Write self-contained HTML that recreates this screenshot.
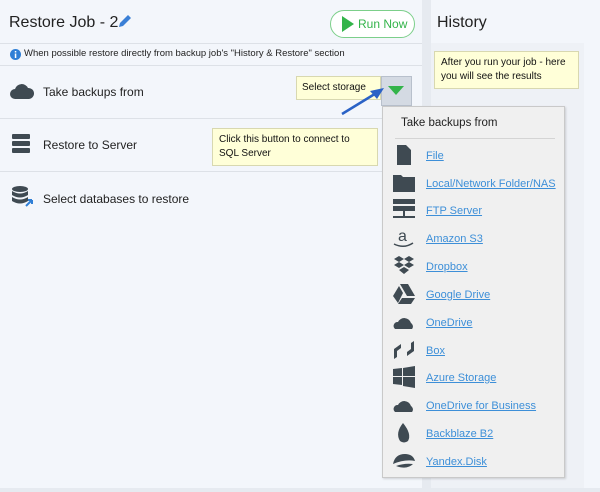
<!DOCTYPE html>
<html><head><style>
*{margin:0;padding:0;box-sizing:border-box}
body{width:600px;height:492px;background:#f3f6fb;font-family:"Liberation Sans",sans-serif;position:relative;overflow:hidden;color:#222}
.abs{position:absolute}
.sep{position:absolute;left:0;width:422px;height:1px;background:#dde1e7}
.ttl{font-size:16px;color:#222}
.row{position:absolute;left:43px;font-size:12px;color:#222}
.tip{position:absolute;background:#ffffd8;border:1px solid #d8d8b0;font-size:10px;color:#111;padding:5px}
.dd{position:absolute;left:382px;top:106px;width:183px;height:372px;background:#f0f0f0;border:1px solid #c9c9c9;box-shadow:1px 1px 2px rgba(0,0,0,.15)}
.it{position:absolute;left:43px;font-size:11px;color:#3d8fd8;text-decoration:underline}
.ic{position:absolute;left:10px;width:22px;height:22px}
</style></head><body>
<div class="abs" style="left:422px;top:0;width:9px;height:492px;background:#e6eaf0"></div>
<div class="abs" style="left:431px;top:43px;width:153px;height:449px;background:#eef1f6"></div>
<div class="abs" style="left:584px;top:43px;width:16px;height:449px;background:#f3f6fb"></div>
<div class="abs" style="left:0;top:488px;width:600px;height:4px;background:#e6eaf0"></div>
<div class="abs ttl" style="left:9px;top:14px">Restore Job - 2</div>
<svg class="abs" style="left:118px;top:14px" width="14" height="14" viewBox="0 0 14 14"><path d="M1 13l1-4 8-8 3 3-8 8z" fill="#3a7fd6"/></svg>
<div class="abs" style="left:330px;top:10px;width:85px;height:28px;border:1.5px solid #7ccf8a;border-radius:14px;background:#fff"></div>
<svg class="abs" style="left:342px;top:16px" width="12" height="16"><path d="M0 0L12 8L0 16z" fill="#33b44a"/></svg>
<div class="abs" style="left:358px;top:17px;font-size:12px;color:#33b44a">Run Now</div>
<div class="abs ttl" style="left:437px;top:14px">History</div>
<div class="sep" style="top:43px"></div>
<svg class="abs" style="left:10px;top:49px" width="11" height="11"><circle cx="5.5" cy="5.5" r="5.5" fill="#2f7fd6"/><rect x="4.8" y="4.5" width="1.5" height="4.5" fill="#fff"/><rect x="4.8" y="2" width="1.5" height="1.5" fill="#fff"/></svg>
<div class="abs" style="left:24px;top:48px;font-size:9.5px;color:#222">When possible restore directly from backup job's "History &amp; Restore" section</div>
<div class="sep" style="top:65px"></div>
<svg class="abs" style="left:10px;top:83px" width="24" height="16"><path d="M5 16a5 5 0 0 1 0-10a7 7 0 0 1 13-1a5.5 5.5 0 0 1 1 11z" fill="#3f4a52"/></svg>
<div class="row" style="top:85px">Take backups from</div>
<div class="sep" style="top:118px"></div>
<svg class="abs" style="left:12px;top:134px" width="18" height="20"><rect y="0" width="18" height="5" rx="1" fill="#3f4a52"/><rect y="7" width="18" height="5" rx="1" fill="#3f4a52"/><rect y="14" width="18" height="5" rx="1" fill="#3f4a52"/></svg>
<div class="row" style="top:138px">Restore to Server</div>
<div class="sep" style="top:171px"></div>
<svg class="abs" style="left:11px;top:185px" width="22" height="22"><ellipse cx="9" cy="4" rx="8" ry="3" fill="#3f4a52"/><path d="M1 6q8 5 16 0v4q-8 5-16 0zM1 12q8 5 16 0v4q-8 5-16 0z" fill="#3f4a52"/><path d="M15 21l6-6M21 15v4M21 15h-4" stroke="#2f7fd6" stroke-width="2" fill="none"/></svg>
<div class="row" style="top:192px">Select databases to restore</div>
<div class="tip" style="left:434px;top:51px;width:145px;height:38px;padding:4px 6px;line-height:14px">After you run your job - here you will see the results</div>
<div class="tip" style="left:296px;top:76px;width:85px;height:24px">Select storage</div>
<div class="abs" style="left:381px;top:76px;width:31px;height:30px;background:#d4dae3;border:1px solid #b8c0cc"></div>
<svg class="abs" style="left:388px;top:86px" width="16" height="9"><path d="M0 0h16L8 9z" fill="#33b44a"/></svg>
<svg class="abs" style="left:340px;top:86px" width="46" height="30"><path d="M2 28L38 6" stroke="#2a62c6" stroke-width="2.5"/><path d="M44 2L30 5L37 13z" fill="#2a62c6"/></svg>
<div class="tip" style="left:212px;top:128px;width:166px;height:38px;padding:4px 6px;line-height:14px">Click this button to connect to SQL Server</div>
<div class="dd">
<div class="abs" style="left:18px;top:10px;font-size:11.5px;color:#222">Take backups from</div>
<div class="abs" style="left:12px;top:31px;width:160px;height:1px;background:#d4d4d4"></div>
<svg class="ic" style="top:37px" viewBox="0 0 22 22"><path d="M4 1h9l5 5v15H4z" fill="#3f4a52"/></svg><div class="it" style="top:43px">File</div>
<svg class="ic" style="top:65px" viewBox="0 0 22 22"><path d="M0 3h8l2 2h12v15H0z" fill="#3f4a52"/></svg><div class="it" style="top:71px">Local/Network Folder/NAS</div>
<svg class="ic" style="top:92px" viewBox="0 0 22 22"><rect x="0" y="0" width="22" height="5" fill="#3f4a52"/><rect x="0" y="7" width="22" height="5" fill="#3f4a52"/><path d="M11 12v5M0 18h22" stroke="#3f4a52" stroke-width="2"/></svg><div class="it" style="top:98px">FTP Server</div>
<svg class="ic" style="top:120px" viewBox="0 0 22 22"><text x="5" y="14" font-size="16" font-family="Liberation Sans" fill="#3f4a52">a</text><path d="M1 17q10 5 19-1" stroke="#3f4a52" stroke-width="1.5" fill="none"/></svg><div class="it" style="top:126px">Amazon S3</div>
<svg class="ic" style="top:148px" viewBox="0 0 22 22"><path d="M6 1l5 3-5 3-5-3zM16 1l5 3-5 3-5-3zM1 10l5-3 5 3-5 3zM21 10l-5-3-5 3 5 3zM6 15l5-3 5 3-5 4z" fill="#3f4a52"/></svg><div class="it" style="top:154px">Dropbox</div>
<svg class="ic" style="top:176px" viewBox="0 0 22 22"><path d="M7 1h8l7 12h-8zM6 3l4 7-5 10-5-7zM9 15h13l-4 6H5z" fill="#3f4a52"/></svg><div class="it" style="top:182px">Google Drive</div>
<svg class="ic" style="top:204px" viewBox="0 0 22 22"><path d="M2 18a4 4 0 0 1 3-7a7 7 0 0 1 13 1a4 4 0 0 1 1 6z" fill="#3f4a52"/></svg><div class="it" style="top:210px">OneDrive</div>
<svg class="ic" style="top:232px" viewBox="0 0 22 22"><path d="M1 10l7-5v4l-4 3v6l-3 2zM21 12l-7 5v-4l4-3V4l3-2z" fill="#3f4a52"/></svg><div class="it" style="top:238px">Box</div>
<svg class="ic" style="top:259px" viewBox="0 0 22 22"><path d="M0 3l9-1v8H0zM10 2l12-2v10H10zM0 11h9v8l-9-1zM10 11h12v11l-12-2z" fill="#3f4a52"/></svg><div class="it" style="top:265px">Azure Storage</div>
<svg class="ic" style="top:287px" viewBox="0 0 22 22"><path d="M2 18a4 4 0 0 1 3-7a7 7 0 0 1 13 1a4 4 0 0 1 1 6z" fill="#3f4a52"/></svg><div class="it" style="top:293px">OneDrive for Business</div>
<svg class="ic" style="top:315px" viewBox="0 0 22 22"><path d="M10 1q-8 10-3 18q4 3 8 0q4-7-5-18z" fill="#3f4a52"/></svg><div class="it" style="top:321px">Backblaze B2</div>
<svg class="ic" style="top:343px" viewBox="0 0 22 22"><path d="M0 14q2-10 12-10q8 0 10 7q-10-2-22 3zM3 16q8-3 17-2q-6 6-17 2z" fill="#3f4a52"/></svg><div class="it" style="top:349px">Yandex.Disk</div>
</div>
</body></html>
